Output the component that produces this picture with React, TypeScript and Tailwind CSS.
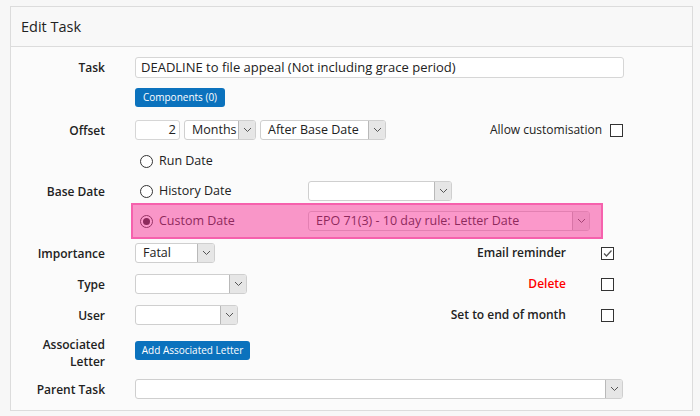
import type { ReactNode } from 'react'

const Chevron = () => (
    <svg width="9" height="6" viewBox="0 0 9 6" fill="none">
        <path d="M1 1l3.5 3.5L8 1" stroke="#555" strokeWidth="1" />
    </svg>
)

const Select = ({ value = '', width, pink = false }: { value?: string; width: string; pink?: boolean }) => (
    <div
        className={`${width} flex h-[20px] items-stretch rounded-[3px] border ${
            pink ? 'border-[#dd7fae] bg-transparent' : 'border-[#cfcfcf] bg-white'
        }`}
    >
        <span className="flex-1 truncate pl-[7px] text-[12.5px] leading-[18px] text-[#222]">{value}</span>
        <span
            className={`flex w-[17px] items-center justify-center border-l ${
                pink ? 'border-[#c46a98] bg-[#e68cba]' : 'border-[#b9b9b9] bg-[#e6e6e6]'
            } rounded-r-[2px]`}
        >
            <Chevron />
        </span>
    </div>
)

const Checkbox = ({ checked = false }: { checked?: boolean }) => (
    <span className="flex h-[13px] w-[13px] items-center justify-center border border-[#333] bg-white">
        {checked && (
            <svg width="11" height="11" viewBox="0 0 11 11" fill="none">
                <path d="M2 5.5l2.5 2.5L9.5 2.5" stroke="#555" strokeWidth="1.3" />
            </svg>
        )}
    </span>
)

const Radio = ({ checked = false }: { checked?: boolean }) => (
    <span className="flex h-[13px] w-[13px] items-center justify-center rounded-full border border-[#333] bg-white">
        {checked && <span className="h-[7px] w-[7px] rounded-full bg-[#222]" />}
    </span>
)

const Row = ({ label, children, className = '' }: { label?: ReactNode; children: ReactNode; className?: string }) => (
    <div className={`flex items-center ${className}`}>
        <div className="w-[94px] shrink-0 text-right text-[12px] font-semibold leading-[17px] text-[#222]">{label}</div>
        <div className="ml-[30px] flex flex-1 items-center">{children}</div>
    </div>
)

const RightCheck = ({ label, red = false, checked = false }: { label: string; red?: boolean; checked?: boolean }) => (
    <div className="ml-auto flex items-center">
        <span className={`text-[12px] font-semibold ${red ? 'text-[#ff0000]' : 'text-[#222]'}`}>{label}</span>
        <span className="ml-[35px] mr-[78px]">
            <Checkbox checked={checked} />
        </span>
    </div>
)

const BlueButton = ({ children, width }: { children: ReactNode; width: string }) => (
    <button
        type="button"
        className={`${width} h-[19px] rounded-[3px] bg-[#0b72bd] text-[10px] leading-[19px] text-white`}
    >
        {children}
    </button>
)

const App = () => {
    return (
        <div className="h-[416px] w-[700px] bg-[#f7f7f7] pl-[10px] pt-[6px] font-['Open_Sans',sans-serif]">
            <div className="h-[405px] w-[683px] border border-[#dcdcdc] bg-[#fbfbfb]">
                <div className="flex h-[40px] items-center border-b border-[#dcdcdc] bg-[#f8f8f8] pl-[10px] text-[14.5px] text-[#222]">
                    Edit Task
                </div>

                <Row label="Task" className="mt-[10px]">
                    <div className="flex h-[21px] w-[489px] items-center rounded-[3px] border border-[#d6d6d6] bg-white pl-[5px] text-[13px] text-[#222]">
                        DEADLINE to file appeal (Not including grace period)
                    </div>
                </Row>

                <Row className="mt-[10px]">
                    <BlueButton width="w-[90px]">Components (0)</BlueButton>
                </Row>

                <Row label="Offset" className="mt-[13px]">
                    <div className="flex h-[20px] w-[45px] items-center justify-end rounded-[3px] border border-[#d6d6d6] bg-white pr-[3px] text-[13px] text-[#222]">
                        2
                    </div>
                    <div className="ml-[4px]">
                        <Select value="Months" width="w-[72px]" />
                    </div>
                    <div className="ml-[4px]">
                        <Select value="After Base Date" width="w-[126px]" />
                    </div>
                    <div className="ml-auto mr-[69px] flex items-center">
                        <span className="text-[12px] text-[#222]">Allow customisation</span>
                        <span className="ml-[8px]">
                            <Checkbox />
                        </span>
                    </div>
                </Row>

                <Row className="mt-[11px] h-[20px]">
                    <span className="ml-[5px]">
                        <Radio />
                    </span>
                    <span className="ml-[6px] text-[12.5px] text-[#222]">Run Date</span>
                </Row>

                <Row label="Base Date" className="mt-[10px]">
                    <span className="ml-[5px]">
                        <Radio />
                    </span>
                    <span className="ml-[6px] w-[149px] text-[12.5px] text-[#222]">History Date</span>
                    <Select width="w-[144px]" />
                </Row>

                <Row className="mt-[2px]">
                    <div className="relative -ml-[4px] flex h-[36px] w-[472px] items-center">
                        <span className="ml-[9px]">
                            <Radio checked />
                        </span>
                        <span className="ml-[6px] w-[149px] text-[12.5px] text-[#222]">Custom Date</span>
                        <div className="bg-white">
                            <Select value="EPO 71(3) - 10 day rule: Letter Date" width="w-[282px]" />
                        </div>
                        <div className="pointer-events-none absolute inset-0 border-2 border-[#f661ad] bg-[#f73296]/50" />
                    </div>
                </Row>

                <Row label="Importance" className="mt-[4px]">
                    <Select value="Fatal" width="w-[80px]" />
                    <RightCheck label="Email reminder" checked />
                </Row>

                <Row label="Type" className="mt-[11px]">
                    <Select width="w-[112px]" />
                    <RightCheck label="Delete" red />
                </Row>

                <Row label="User" className="mt-[11px]">
                    <Select width="w-[103px]" />
                    <RightCheck label="Set to end of month" />
                </Row>

                <div className="mt-[11px] flex items-start">
                    <div className="w-[94px] shrink-0 text-right text-[12px] font-semibold leading-[17px] text-[#222]">
                        Associated Letter
                    </div>
                    <div className="ml-[30px]">
                        <BlueButton width="w-[115px]">Add Associated Letter</BlueButton>
                    </div>
                </div>

                <Row label="Parent Task" className="mt-[9px]">
                    <Select width="w-[488px]" />
                </Row>
            </div>
        </div>
    )
}

export default App
